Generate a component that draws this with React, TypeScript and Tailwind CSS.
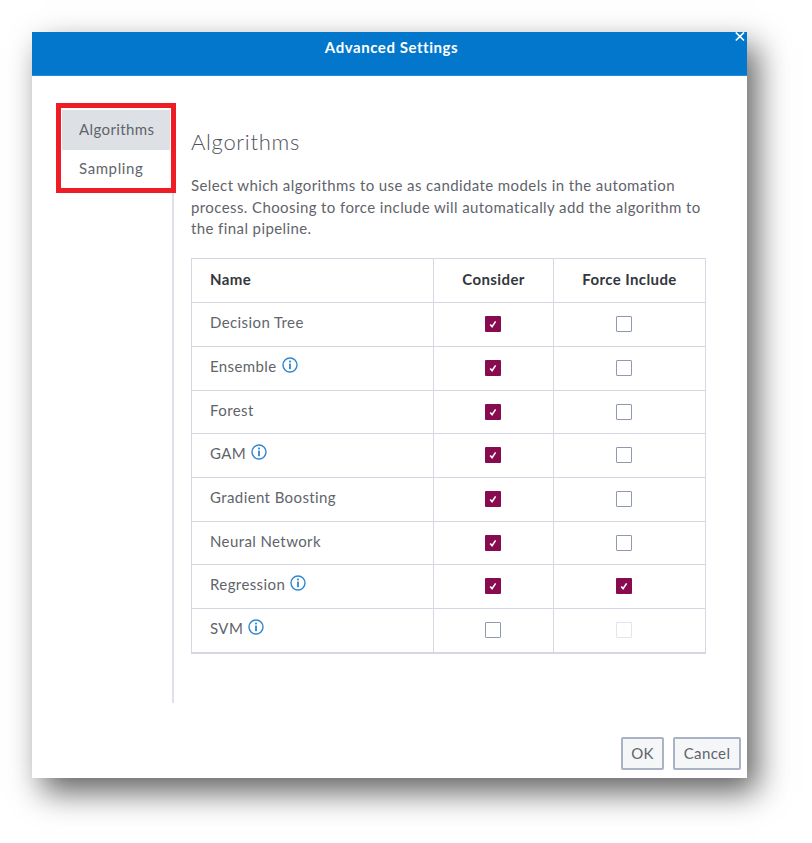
import React from "react";

const rows: { name: string; info?: boolean; consider: boolean; force: "on" | "off" | "disabled" }[] = [
  { name: "Decision Tree", consider: true, force: "off" },
  { name: "Ensemble", info: true, consider: true, force: "off" },
  { name: "Forest", consider: true, force: "off" },
  { name: "GAM", info: true, consider: true, force: "off" },
  { name: "Gradient Boosting", consider: true, force: "off" },
  { name: "Neural Network", consider: true, force: "off" },
  { name: "Regression", info: true, consider: true, force: "on" },
  { name: "SVM", info: true, consider: false, force: "disabled" },
];

const rowHeights = ["h-[44px]", "h-[44px]", "h-[43px]", "h-[44px]", "h-[44px]", "h-[43px]", "h-[44px]", "h-[43px]"];

function Check({ state }: { state: "on" | "off" | "disabled" }) {
  if (state === "on") {
    return (
      <span className="flex h-[16px] w-[16px] items-center justify-center rounded-[1px] bg-[#870b4e]">
        <svg width="10" height="10" viewBox="0 0 10 10" fill="none">
          <path d="M2.2 5.4 L4.1 7.6 L7.6 2.4" stroke="#fff" strokeWidth="1.6" />
        </svg>
      </span>
    );
  }
  if (state === "disabled") {
    return <span className="h-[16px] w-[16px] rounded-[1px] border border-[#e3e5ea] bg-white" />;
  }
  return <span className="h-[16px] w-[16px] rounded-[1px] border border-[#8f9ab0] bg-white" />;
}

function Info() {
  return (
    <svg width="16" height="16" viewBox="0 0 16 16" fill="none" className="ml-[5px] -translate-y-[2px]">
      <circle cx="8" cy="8" r="7" stroke="#2f86cf" strokeWidth="1.4" />
      <rect x="7.1" y="3.6" width="1.8" height="1.8" fill="#2f86cf" />
      <rect x="7.1" y="6.6" width="1.8" height="5.6" fill="#2f86cf" />
    </svg>
  );
}

export default function App() {
  return (
    <div className="h-[843px] w-[812px] bg-white pl-[32px] pt-[32px] font-['Lato','Liberation_Sans',sans-serif] text-[15px] tracking-[0.4px] text-[#5f646b]">
      <div className="flex h-[746px] w-[715px] flex-col bg-white shadow-[10px_14px_30px_rgba(0,0,0,0.62)]">
        <header className="relative flex h-[44px] flex-none items-center justify-center border-b border-[#2a86d8] bg-[#0277cc] pb-[12px] pl-[4px] text-[15px] font-bold tracking-[0.55px] text-white">
          Advanced Settings
          <svg width="10" height="10" viewBox="0 0 10 10" className="absolute right-[2px] top-0" fill="none">
            <path d="M0.8 0.5 L9 8.5 M9 0.5 L0.8 8.5" stroke="#fff" strokeWidth="1.7" />
          </svg>
        </header>
        <div className="flex min-h-0 flex-1">
          <aside className="mt-[27px] h-[600px] w-[142px] flex-none border-r-2 border-[#dfe1e9]">
            <nav className="relative ml-[24px] h-[90px] w-[120px] border-[5px] border-[#ee1c25] bg-white px-[1px] pt-[2px]">
              <div className="flex h-[40px] items-center bg-[#dde0e5] pb-[2px] pl-[17px]">Algorithms</div>
              <div className="flex h-[38px] items-center pb-[2px] pl-[17px] tracking-[0.6px]">Sampling</div>
            </nav>
          </aside>
          <main className="ml-[17px] min-w-0 flex-1 pt-[51px]">
            <h1 className="text-[22px] font-light leading-[30px] tracking-[0.7px] text-[#4f545b]">Algorithms</h1>
            <p className="mt-[18px] w-[520px] text-[15px] leading-[21.5px]">
              Select which algorithms to use as candidate models in the automation process. Choosing to force include will automatically add the algorithm to the final pipeline.
            </p>
            <div className="mt-[18px] w-[515px] border-x border-t border-b-2 border-[#d5d8e2]">
              <div className="grid h-[44px] grid-cols-[241px_120px_1fr] border-b border-[#d5d8e2] font-bold text-[#33373c]">
                <div className="flex items-center pb-[2px] pl-[18px]">Name</div>
                <div className="flex items-center justify-center border-l border-[#d5d8e2] pb-[2px]">Consider</div>
                <div className="flex items-center justify-center border-l border-[#d5d8e2] pb-[2px]">Force Include</div>
              </div>
              {rows.map((r, i) => (
                <div
                  key={r.name}
                  className={`grid grid-cols-[241px_120px_1fr] ${rowHeights[i]} ${i < rows.length - 1 ? "border-b border-[#d5d8e2]" : ""}`}
                >
                  <div className="flex items-center pb-[3px] pl-[18px]">
                    {r.name}
                    {r.info && <Info />}
                  </div>
                  <div className="flex items-center justify-center border-l border-[#d5d8e2] pr-[2px]">
                    <Check state={r.consider ? "on" : "off"} />
                  </div>
                  <div className="flex items-center justify-center border-l border-[#d5d8e2] pr-[12px]">
                    <Check state={r.force} />
                  </div>
                </div>
              ))}
            </div>
            <div className="mt-[83px] flex justify-end gap-[9px] pr-[6px]">
              <button className="h-[33px] w-[43px] rounded-[2px] border-2 border-[#a9b3c5] bg-[#f5f6f8]">OK</button>
              <button className="h-[33px] w-[68px] rounded-[2px] border-2 border-[#a9b3c5] bg-[#f5f6f8]">Cancel</button>
            </div>
          </main>
        </div>
      </div>
    </div>
  );
}
